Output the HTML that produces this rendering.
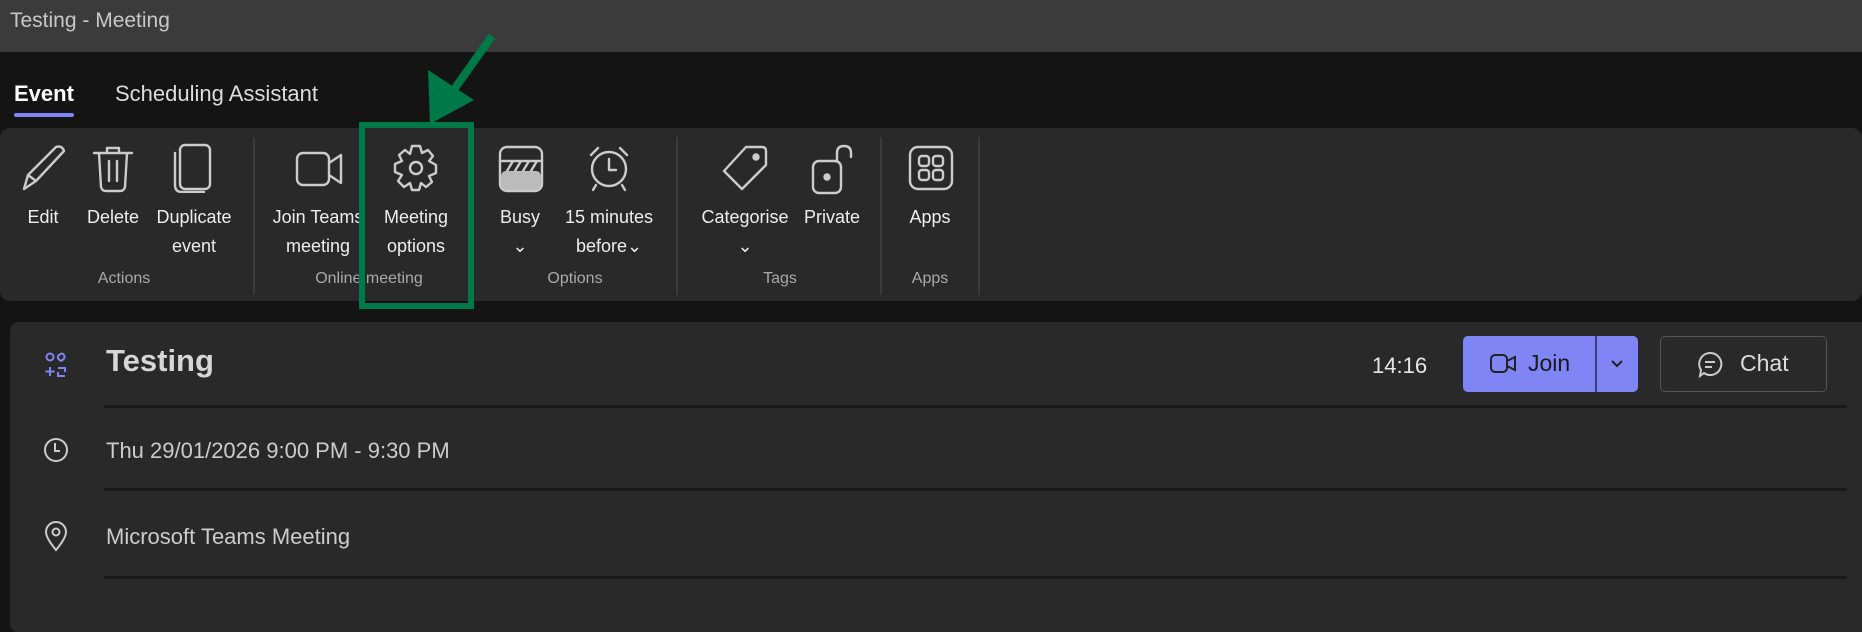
<!DOCTYPE html>
<html><head><meta charset="utf-8"><style>
*{margin:0;padding:0;box-sizing:border-box}
body{width:1862px;height:623px;background:#141414;font-family:"Liberation Sans",sans-serif;color:#e6e6e6;position:relative;overflow:hidden}
.a{position:absolute}
.lbl{position:absolute;font-size:18px;text-align:center;line-height:29px;color:#eee;white-space:nowrap;transform:translateX(-50%);top:203px}
.grp{position:absolute;font-size:16px;color:#aaa;transform:translateX(-50%);top:270px;white-space:nowrap}
.sep{position:absolute;top:137px;width:2px;height:158px;background:#3c3c3c}
svg.ic{position:absolute;top:143px;fill:none;stroke:#ccc;stroke-width:2.4;stroke-linecap:round;stroke-linejoin:round}
.line{position:absolute;left:104px;width:1743px;height:3px;background:#1a1a1a}
</style></head><body>
<div class="a" style="left:0;top:0;width:1862px;height:52px;background:#3b3b3b"></div>
<div class="a" style="left:10px;top:9px;font-size:21px;color:#c8c8c8">Testing - Meeting</div>
<div class="a" style="left:14px;top:81px;font-size:22px;color:#fff;font-weight:bold">Event</div>
<div class="a" style="left:14px;top:113px;width:60px;height:4px;border-radius:2px;background:#7f85f5"></div>
<div class="a" style="left:115px;top:81px;font-size:22px;color:#ddd">Scheduling Assistant</div>

<div class="a" style="left:0;top:128px;width:1862px;height:173px;background:#292929;border-radius:10px"></div>
<!-- icons -->
<svg class="ic" style="left:20px" width="48" height="50" viewBox="0 0 48 50"><path d="M4 46 L8 32 L36 4 Q42 2 44 8 L16 38 Z M8 32 L16 38"/></svg>
<svg class="ic" style="left:90px" width="46" height="50" viewBox="0 0 46 50"><path d="M4 10 H42 M17 10 V5 H29 V10 M9 10 L11 44 Q12 48 16 48 H30 Q34 48 35 44 L37 10 M19 18 V38 M27 18 V38"/></svg>
<svg class="ic" style="left:170px" width="46" height="50" viewBox="0 0 46 50"><rect x="10" y="2" width="30" height="44" rx="5"/><path d="M5 10 V42 Q5 49 12 49 H34"/></svg>
<svg class="ic" style="left:295px" width="50" height="50" viewBox="0 0 50 50"><rect x="2" y="10" width="32" height="32" rx="6"/><path d="M34 20 L46 12 V40 L34 32"/></svg>
<svg class="ic" style="left:392px" width="48" height="50" viewBox="0 0 48 50"><path d="M20 3 H28 L30 10 L36 7 L41 13 L37 18 L44 22 V30 L37 33 L40 39 L34 44 L29 40 L27 47 H20 L18 40 L12 44 L6 38 L10 32 L3 29 V21 L10 18 L7 12 L13 7 L18 11 Z"/><circle cx="24" cy="25" r="6"/></svg>
<svg class="ic" style="left:497px" width="48" height="50" viewBox="0 0 48 50"><rect x="3" y="4" width="42" height="44" rx="7"/><path d="M5 18 H43 M10 28 L16 18 M18 28 L24 18 M26 28 L32 18 M34 28 L40 18"/><rect x="4" y="28" width="40" height="19" rx="5" fill="#bbb" stroke="none"/></svg>
<svg class="ic" style="left:585px" width="48" height="50" viewBox="0 0 48 50"><circle cx="24" cy="26" r="17"/><path d="M24 16 V27 H31 M6 12 L13 5 M42 12 L35 5 M11 42 L8 47 M37 42 L40 47"/></svg>
<svg class="ic" style="left:720px" width="50" height="50" viewBox="0 0 50 50"><path d="M26 4 H42 Q46 4 46 8 V22 L22 46 L4 28 Z"/><circle cx="36" cy="14" r="2.5" fill="#ccc"/></svg>
<svg class="ic" style="left:808px" width="48" height="52" viewBox="0 0 48 52"><rect x="5" y="18" width="28" height="32" rx="6"/><path d="M29 18 V10 Q29 3 36 3 Q43 3 43 10 V14"/><circle cx="19" cy="34" r="2.5" fill="#ccc"/></svg>
<svg class="ic" style="left:907px" width="48" height="50" viewBox="0 0 48 50"><rect x="3" y="4" width="42" height="42" rx="8"/><rect x="12" y="13" width="10" height="10" rx="3"/><rect x="26" y="13" width="10" height="10" rx="3"/><rect x="12" y="27" width="10" height="10" rx="3"/><rect x="26" y="27" width="10" height="10" rx="3"/></svg>

<div class="lbl" style="left:43px">Edit</div>
<div class="lbl" style="left:113px">Delete</div>
<div class="lbl" style="left:194px">Duplicate<br>event</div>
<div class="lbl" style="left:318px">Join Teams<br>meeting</div>
<div class="lbl" style="left:416px">Meeting<br>options</div>
<div class="lbl" style="left:520px">Busy<br>⌄</div>
<div class="lbl" style="left:609px">15 minutes<br>before⌄</div>
<div class="lbl" style="left:745px">Categorise<br>⌄</div>
<div class="lbl" style="left:832px">Private</div>
<div class="lbl" style="left:930px">Apps</div>
<div class="grp" style="left:124px">Actions</div>
<div class="grp" style="left:369px">Online meeting</div>
<div class="grp" style="left:575px">Options</div>
<div class="grp" style="left:780px">Tags</div>
<div class="grp" style="left:930px">Apps</div>
<div class="sep" style="left:253px"></div>
<div class="sep" style="left:676px"></div>
<div class="sep" style="left:880px"></div>
<div class="sep" style="left:978px"></div>

<!-- green highlight -->
<div class="a" style="left:359px;top:122px;width:115px;height:187px;border:6px solid #00794a"></div>
<svg class="a" style="left:0;top:0" width="600" height="140"><line x1="492" y1="36" x2="448" y2="98" stroke="#00794a" stroke-width="8"/><polygon points="428,70 430,124 474,100" fill="#00794a"/></svg>

<!-- content -->
<div class="a" style="left:10px;top:322px;width:1860px;height:310px;background:#292929;border-radius:8px"></div>
<svg class="a" style="left:44px;top:351px" width="24" height="28" viewBox="0 0 24 28" fill="none" stroke="#7f85f5" stroke-width="2"><circle cx="6" cy="6" r="3.5"/><path d="M15 4 Q18 1 20 4 Q22 7 17 10 Q12 7 15 4Z"/><path d="M6 16 V25 M1.5 20.5 H10.5 M14 17 H21 V21 M21 25 H14 V21"/></svg>
<div class="a" style="left:106px;top:343px;font-size:31px;font-weight:bold;color:#d6d6d6">Testing</div>
<div class="a" style="left:1372px;top:353px;font-size:22px;color:#e6e6e6">14:16</div>
<div class="a" style="left:1463px;top:336px;width:175px;height:56px;background:#7f85f5;border-radius:5px"></div>
<div class="a" style="left:1595px;top:336px;width:2px;height:56px;background:#3a3d7a"></div>
<svg class="a" style="left:1490px;top:353px" width="28" height="22" viewBox="0 0 28 22" fill="none" stroke="#222" stroke-width="2"><rect x="1" y="2" width="16" height="17" rx="4"/><path d="M17 8 L25 4 V17 L17 13"/></svg>
<div class="a" style="left:1528px;top:350px;font-size:23px;color:#1a1a1a">Join</div>
<svg class="a" style="left:1609px;top:358px" width="16" height="12" viewBox="0 0 16 12" fill="none" stroke="#222" stroke-width="2"><path d="M3 3 L8 8 L13 3"/></svg>
<div class="a" style="left:1660px;top:336px;width:167px;height:56px;border:1.5px solid #555;border-radius:5px"></div>
<svg class="a" style="left:1697px;top:351px" width="26" height="28" viewBox="0 0 26 28" fill="none" stroke="#ccc" stroke-width="2"><path d="M13 2 A11 11 0 1 1 7 22 L3 25 L4 19 A11 11 0 0 1 13 2Z"/><path d="M8 11 H18 M8 16 H15"/></svg>
<div class="a" style="left:1740px;top:350px;font-size:23px;color:#ddd">Chat</div>
<div class="line" style="top:405px"></div>
<svg class="a" style="left:43px;top:435px" width="26" height="30" viewBox="0 0 26 30" fill="none" stroke="#ccc" stroke-width="2"><circle cx="13" cy="15" r="11"/><path d="M12 8 V16 H17"/></svg>
<div class="a" style="left:106px;top:438px;font-size:22px;color:#ccc">Thu 29/01/2026 9:00 PM - 9:30 PM</div>
<div class="line" style="top:488px"></div>
<svg class="a" style="left:44px;top:520px" width="24" height="32" viewBox="0 0 24 32" fill="none" stroke="#ccc" stroke-width="2"><path d="M12 30 Q2 18 2 12 A10 10 0 0 1 22 12 Q22 18 12 30Z"/><circle cx="12" cy="12" r="3.5"/></svg>
<div class="a" style="left:106px;top:524px;font-size:22px;color:#ccc">Microsoft Teams Meeting</div>
<div class="line" style="top:576px"></div>
</body></html>
